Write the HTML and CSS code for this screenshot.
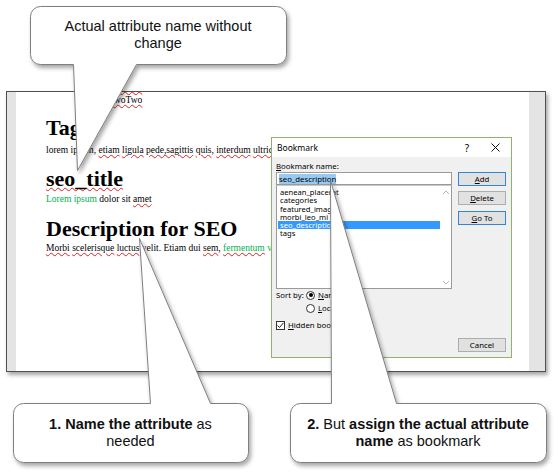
FILE: index.html
```html
<!DOCTYPE html>
<html>
<head>
<meta charset="utf-8">
<title>Bookmark attribute</title>
<link rel="stylesheet" href="styles.css">
</head>
<body>
<div class="doc">
  <div class="gutter-l"></div>
  <div class="page">
    <div class="flow">
      <p class="tl indent"><span class="sq">TwoTwoTwo</span></p>
      <p class="tl indent"><span class="sq">TwoTwoTwo</span></p>
      <h2 class="hd hd-tag">Tag</h2>
      <p class="tl">lorem ipsum, <span class="sq">etiam</span> <span class="sq">ligula</span> <span class="sq">pede,sagittis</span> <span class="sq">quis</span>, <span class="sq">interdum</span> <span class="sq">ultricies</span></p>
      <h2 class="hd hd-seo"><span class="sq">seo_title</span></h2>
      <p class="tl"><span class="green">Lorem ipsum</span> dolor sit <span class="sq">amet</span></p>
      <h2 class="hd hd-desc">Description for SEO</h2>
      <p class="tl"><span class="sq">Morbi</span> <span class="sq">scelerisque</span> <span class="sq">luctus</span> velit. Etiam dui <span class="sq">sem</span>, <span class="green sq">fermentum</span> <span class="green">vitae</span></p>
    </div>
  </div>
  <div class="gutter-r"></div>
</div>

<div class="dialog">
  <div class="dlg-title">
    <span class="dlg-name">Bookmark</span>
    <span class="dlg-ctrls">
      <span class="ctrl">?</span>
      <span class="ctrl"><svg width="9" height="9" viewBox="0 0 9 9"><path d="M0.5 0.5 L8.5 8.5 M8.5 0.5 L0.5 8.5" stroke="#111" stroke-width="1" fill="none"/></svg></span>
    </span>
  </div>
  <div class="dlg-body">
    <div class="dlg-left">
      <div class="lbl"><u>B</u>ookmark name:</div>
      <div class="input"><span class="sel">seo_description</span></div>
      <div class="list">
        <div class="items">
          <div class="item">aenean_placerat</div>
          <div class="item">categories</div>
          <div class="item">featured_image</div>
          <div class="item">morbi_leo_mi</div>
          <div class="item item-sel">seo_description</div>
          <div class="item">tags</div>
        </div>
        <div class="scroll">
          <svg width="8" height="5" viewBox="0 0 8 5"><path d="M1 4 L4 1 L7 4" stroke="#b5b5b5" fill="none"/></svg>
          <svg width="8" height="5" viewBox="0 0 8 5"><path d="M1 1 L4 4 L7 1" stroke="#b5b5b5" fill="none"/></svg>
        </div>
      </div>
      <div class="opt-row">
        <span class="sort-lbl">Sort by:</span>
        <span class="radio on"></span>
        <span><u>N</u>ame</span>
      </div>
      <div class="opt-row indent2">
        <span class="radio"></span>
        <span><u>L</u>ocation</span>
      </div>
      <div class="opt-row chk-row">
        <span class="check"><svg width="9" height="9" viewBox="0 0 9 9"><path d="M1.5 4.5 L3.5 6.5 L7.5 1.8" stroke="#222" fill="none"/></svg></span>
        <span><u>H</u>idden bookmarks</span>
      </div>
    </div>
    <div class="dlg-right">
      <div class="btn btn-def btn-add"><span><u>A</u>dd</span></div>
      <div class="btn btn-del"><span><u>D</u>elete</span></div>
      <div class="btn btn-def btn-go"><span><u>G</u>o To</span></div>
      <div class="btn btn-cancel"><span>Cancel</span></div>
    </div>
  </div>
</div>

<svg class="callouts" width="558" height="474" viewBox="0 0 558 474">
  <defs>
    <filter id="sh" x="-10%" y="-10%" width="130%" height="130%">
      <feDropShadow dx="2" dy="3" stdDeviation="2" flood-color="#000" flood-opacity="0.35"/>
    </filter>
  </defs>
  <g fill="#fff" stroke="#7f7f7f" stroke-width="1" filter="url(#sh)">
    <path d="M40.5 6.5 H276.5 A10 10 0 0 1 286.5 16.5 V54.5 A10 10 0 0 1 276.5 64.5 H136.5 L77.5 170.5 L73.5 64.5 H40.5 A10 10 0 0 1 30.5 54.5 V16.5 A10 10 0 0 1 40.5 6.5 Z"/>
    <path d="M23.5 403.5 H150.5 L139.5 238.5 L210.5 403.5 H238.5 A10 10 0 0 1 248.5 413.5 V452.5 A10 10 0 0 1 238.5 462.5 H23.5 A10 10 0 0 1 13.5 452.5 V413.5 A10 10 0 0 1 23.5 403.5 Z"/>
    <path d="M300.5 403.5 H331.5 L330.5 180.5 L396.5 403.5 H536.5 A10 10 0 0 1 546.5 413.5 V452.5 A10 10 0 0 1 536.5 462.5 H300.5 A10 10 0 0 1 290.5 452.5 V413.5 A10 10 0 0 1 300.5 403.5 Z"/>
  </g>
</svg>

<div class="note note-top"><p>Actual attribute name without<br>change</p></div>
<div class="note note-bl"><p><b>1. Name the attribute</b> as<br>needed</p></div>
<div class="note note-br"><p><b>2.</b> But <b>assign the actual attribute<br>name</b> as bookmark</p></div>
</body>
</html>
```

FILE: styles.css
```css
html, body {
  margin: 0;
  padding: 0;
}
body {
  width: 558px;
  height: 474px;
  background: #fff;
  position: relative;
  overflow: hidden;
  font-family: "Liberation Sans", Arial, sans-serif;
}

/* document window */
.doc {
  margin: 91px 0 0 6px;
  width: 540px;
  height: 281px;
  box-sizing: border-box;
  border: 1px solid #505050;
  display: flex;
  box-shadow: 2px 3px 4px rgba(0, 0, 0, 0.35);
  background: #fff;
}
.gutter-l {
  width: 9px;
  background: #e4e4e4;
}
.gutter-r {
  width: 16px;
  background: #e4e4e4;
}
.page {
  flex: 1;
  overflow: hidden;
  padding-left: 30px;
}
.flow {
  margin-top: -11.5px;
}
.tl {
  margin: 0;
  height: 13px;
  line-height: 13px;
  font-family: "Liberation Serif", "Times New Roman", serif;
  font-size: 9.5px;
  color: #000;
  white-space: nowrap;
}
.indent {
  padding-left: 46px;
}
.sq {
  text-decoration: underline wavy #e02020;
  text-decoration-thickness: 1px;
  text-underline-offset: 1px;
}
.green {
  color: #00b050;
}
.hd {
  margin: 0;
  font-family: "Liberation Serif", "Times New Roman", serif;
  font-weight: bold;
  font-size: 22px;
  line-height: 24px;
  height: 24px;
  color: #000;
  white-space: nowrap;
}
.hd-tag {
  margin-top: 9.1px;
  margin-bottom: 4.9px;
}
.hd-seo {
  margin-top: 9.1px;
  margin-bottom: 2.9px;
}
.hd-desc {
  margin-top: 10.1px;
  margin-bottom: 1.9px;
}

/* bookmark dialog */
.dialog {
  position: absolute;
  left: 271px;
  top: 137px;
  width: 241px;
  height: 221px;
  box-sizing: border-box;
  border: 1px solid #8db36c;
  background: #f0f0f0;
  font-family: "Noto Sans", "DejaVu Sans", sans-serif;
  font-size: 7.8px;
  color: #000;
  display: flex;
  flex-direction: column;
}
.dlg-title {
  height: 19px;
  background: #fff;
  display: flex;
  align-items: center;
  justify-content: space-between;
  padding-left: 5px;
  padding-right: 2px;
  font-size: 8.5px;
}
.dlg-ctrls {
  display: flex;
}
.ctrl {
  width: 28px;
  height: 19px;
  display: flex;
  align-items: center;
  justify-content: center;
  font-size: 10px;
}
.dlg-body {
  flex: 1;
  display: grid;
  grid-template-columns: 176px 48px;
  column-gap: 6px;
  padding: 0 5px 5px 4px;
}
.dlg-left {
  display: flex;
  flex-direction: column;
}
.lbl {
  margin-top: 4px;
  height: 10px;
  line-height: 10px;
}
.input {
  margin-top: 1px;
  height: 13px;
  box-sizing: border-box;
  border: 1px solid #9a9a9a;
  background: #fff;
  display: flex;
  align-items: center;
  padding-left: 2px;
}
.sel {
  background: #99c9ef;
  line-height: 10px;
  color: #000;
}
.list {
  height: 104px;
  box-sizing: border-box;
  border: 1px solid #9a9a9a;
  border-top-color: #c8c8c8;
  background: #fff;
  display: flex;
}
.items {
  flex: 1;
  padding: 2px 0 0 1px;
  font-size: 7.6px;
}
.item {
  height: 8.3px;
  line-height: 8.3px;
  padding-left: 2px;
  white-space: nowrap;
}
.item-sel {
  background: #3399ff;
  color: #fff;
}
.scroll {
  width: 11px;
  display: flex;
  flex-direction: column;
  justify-content: space-between;
  align-items: center;
  padding: 4px 0 3px;
}
.opt-row {
  display: flex;
  align-items: center;
  height: 10px;
  margin-top: 1px;
  white-space: nowrap;
}
.sort-lbl {
  width: 30px;
}
.indent2 {
  padding-left: 30px;
  margin-top: 3px;
}
.chk-row {
  margin-top: 7px;
}
.radio {
  width: 9px;
  height: 9px;
  box-sizing: border-box;
  border: 1px solid #333;
  border-radius: 50%;
  background: #fff;
  margin-right: 3px;
  display: flex;
  align-items: center;
  justify-content: center;
}
.radio.on::after {
  content: "";
  width: 4px;
  height: 4px;
  border-radius: 50%;
  background: #000;
}
.check {
  width: 9px;
  height: 9px;
  box-sizing: border-box;
  border: 1px solid #333;
  background: #fff;
  margin-right: 3px;
  display: flex;
}
.check svg {
  margin: -1px;
}
.dlg-right {
  display: flex;
  flex-direction: column;
}
.btn {
  height: 14px;
  box-sizing: border-box;
  border: 1px solid #adadad;
  background: #e1e1e1;
  display: flex;
  align-items: center;
  justify-content: center;
  line-height: 10px;
}
.btn-def {
  border-color: #2f86d6;
}
.btn-add {
  margin-top: 15px;
}
.btn-del {
  margin-top: 5px;
}
.btn-go {
  margin-top: 6px;
}
.btn-cancel {
  margin-top: auto;
}

/* callouts */
.callouts {
  position: absolute;
  left: 0;
  top: 0;
  pointer-events: none;
}
.note {
  position: absolute;
  display: flex;
  align-items: center;
  justify-content: center;
  text-align: center;
  font-family: "Liberation Sans", Arial, sans-serif;
  font-size: 14.5px;
  line-height: 17px;
  color: #111;
}
.note p {
  margin: 0;
}
.note-top {
  left: 30px;
  top: 6px;
  width: 256px;
  height: 58px;
}
.note-bl {
  left: 13px;
  top: 403px;
  width: 235px;
  height: 59px;
}
.note-br {
  left: 290px;
  top: 403px;
  width: 256px;
  height: 59px;
}
```
